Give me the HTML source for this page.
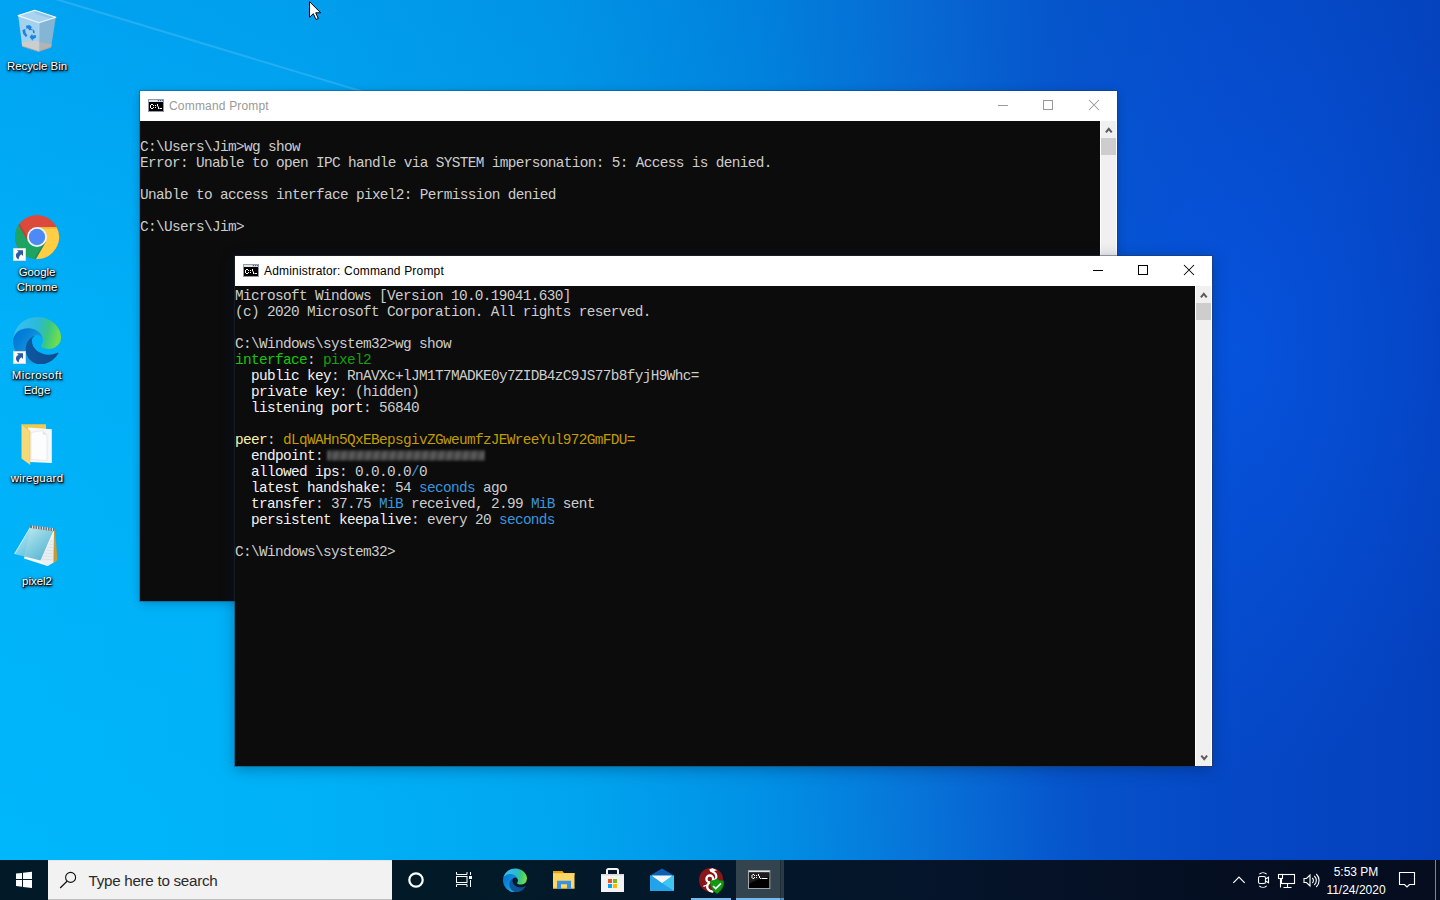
<!DOCTYPE html>
<html>
<head>
<meta charset="utf-8">
<title>Desktop</title>
<style>
*{box-sizing:border-box;margin:0;padding:0}
html,body{width:1440px;height:900px;overflow:hidden;background:#0078d7;font-family:"Liberation Sans",sans-serif}
#desk{position:absolute;left:0;top:0;width:1440px;height:900px;overflow:hidden;
background:
 radial-gradient(ellipse 280px 430px at 1240px 350px, rgba(6,92,238,.55), rgba(6,92,238,0) 100%),
 linear-gradient(100deg, rgba(0,185,255,.0) 0%, rgba(0,185,255,0) 100%),
 linear-gradient(90deg,#00adf6 0px,#00a8f2 300px,#009be9 560px,#0086df 760px,#086bd4 920px,#0654cb 1060px,#0548c6 1220px,#0440bc 1440px);
}
#desk .glow{position:absolute;left:0;top:0;width:1440px;height:860px;
background:radial-gradient(ellipse 1100px 800px at 0px 900px,rgba(0,190,255,.6) 0%,rgba(0,190,255,.35) 45%,rgba(0,190,255,0) 100%),linear-gradient(180deg,rgba(0,90,200,.12) 0px,rgba(0,120,220,0) 300px)}
.win{position:absolute;background:#fff;box-shadow:0 0 0 1px rgba(45,50,60,.42),0 3px 14px 0 rgba(0,30,70,.38)}
.win.inact{box-shadow:0 0 0 1px rgba(30,45,70,.32),0 2px 9px 0 rgba(0,30,70,.30)}
.win .tb{position:absolute;left:0;top:0;right:0;height:30px;background:#fff}
.win .ttl{position:absolute;left:29px;top:7px;font-size:12px;line-height:16px;white-space:nowrap;color:#000;letter-spacing:.18px}
.win.inact .ttl{color:#999}
.term{position:absolute;left:0;top:30px;width:960px;height:480px;background:#0c0c0c;color:#ccc;
font-family:"Liberation Mono",monospace;font-size:14.4px;letter-spacing:-0.64px;line-height:16px;white-space:pre;overflow:hidden}
.term div{height:16px;position:relative;top:1.5px}
.sb{position:absolute;left:961px;top:30px;width:15px;height:480px;background:#f0f0f0}
.sb .th{position:absolute;left:0;top:17px;width:15px;height:17px;background:#cdcdcd}
.blr{position:absolute;left:92px;top:2.500px;width:158px;height:11px;filter:blur(1px);background:linear-gradient(180deg,rgba(12,12,12,.45),rgba(12,12,12,0) 30%,rgba(12,12,12,0) 70%,rgba(12,12,12,.45)),repeating-linear-gradient(100deg,#595959 0,#595959 3px,#474747 4px,#474747 7px,#595959 8px)}
.g{color:#13a10e}.G{color:#16c60c}.w{color:#f2f2f2}.y{color:#c19c00}.Y{color:#f9f1a5}.c{color:#3a96dd}
#task{position:absolute;left:0;top:860px;width:1440px;height:40px;
background:linear-gradient(90deg,#021a27 0px,#021a28 450px,#03182a 700px,#05142a 950px,#050f22 1200px,#050d1f 1440px)}
.ico{position:absolute}
.lbl{position:absolute;width:90px;text-align:center;color:#fff;font-size:11.400px;line-height:15px;
text-shadow:1px 1px 1px rgba(0,0,0,.9),0 1px 2px rgba(0,0,0,.9),0 0 3px rgba(0,0,0,.75),1px 2px 3px rgba(0,0,0,.6)}
</style>
</head>
<body>
<svg width="0" height="0" style="position:absolute">
<defs>
<symbol id="cmdi" viewBox="0 0 16 13">
<rect x="0" y="0" width="16" height="13" fill="#9499a1"/>
<rect x="1" y="1" width="14" height="2" fill="#dfe3ea"/>
<rect x="9.800" y="1" width="1.200" height="1.200" fill="#3f64a3"/><rect x="11.800" y="1" width="1.200" height="1.200" fill="#3f64a3"/><rect x="13.700" y="1" width="1.200" height="1.200" fill="#3f64a3"/>
<rect x="1" y="3" width="14" height="9" fill="#000"/>
<path fill="#fff" d="M3 5h2v1h-2zM2 6h1v3h-1zM3 9h2v1h-2zM5 6h1v1h-1zM5 8h1v1h-1zM7 6h1v1h-1zM7 8h1v1h-1zM9 5h1v2h-1zM9.5 7h1v1h-1zM10 8h1v2h-1zM11.5 9h2.5v1h-2.5z"/>
</symbol>
<symbol id="arru" viewBox="0 0 8 6"><path d="M0.900 5.400L3.800 1.800L6.700 5.400" fill="none" stroke="#5c5c5c" stroke-width="2"/></symbol>
</defs></svg>
<div id="desk"><div class="glow"></div>
<svg width="1440" height="860" style="position:absolute;left:0;top:0"><path d="M0 0H55L520 140H0z" fill="rgba(0,180,255,.10)"/><path d="M52 -2L520 139" stroke="rgba(160,225,255,.22)" stroke-width="2" fill="none" style="filter:blur(.7px)"/></svg>

<!-- DESKTOP ICONS -->
<div id="icons">
<svg width="340" height="620" viewBox="0 0 340 620" style="position:absolute;left:0;top:0">
<defs>
<linearGradient id="rbL" x1="0" y1="0" x2="0" y2="1"><stop offset="0" stop-color="#8cc8ee"/><stop offset=".75" stop-color="#a9d4ee"/><stop offset=".8" stop-color="#cfd2d4"/><stop offset="1" stop-color="#c4c4c4"/></linearGradient>
<linearGradient id="rbR" x1="0" y1="0" x2="0" y2="1"><stop offset="0" stop-color="#74a9cc"/><stop offset=".78" stop-color="#8cb6d0"/><stop offset=".83" stop-color="#b9bcbe"/><stop offset="1" stop-color="#adadad"/></linearGradient>
<linearGradient id="npg" x1="0" y1="0" x2="1" y2="1"><stop offset="0" stop-color="#d9f1f7"/><stop offset=".5" stop-color="#7fcde0"/><stop offset="1" stop-color="#3da5c6"/></linearGradient>
<symbol id="sc" viewBox="0 0 13 13">
<rect x="0" y="0" width="13" height="13" fill="#d8cdc8"/><rect x=".8" y=".8" width="11.400" height="11.400" fill="#fbfbfb"/>
<path d="M3.900 2.200H10V8L8.300 6.300C6.600 7.600 5.800 9.300 5.600 11.600C3.400 10.200 2.400 8 3.200 6C3.700 4.900 4.600 4.200 5.700 3.900Z" fill="#2a5aa0"/>
</symbol>
</defs>
<!-- recycle bin -->
<g>
<path d="M18.200 15.600L34.700 10.200L55.800 17.200L39.100 22.800z" fill="#a9d4ef"/>
<path d="M34.700 10.200L55.800 17.200L52.500 19.200L35.200 13.400z" fill="#8fc3e4" opacity=".8"/>
<path d="M18.200 15.600L39.100 22.800L38.700 51.600L22.200 46.300z" fill="#a3d1ee"/>
<path d="M39.100 22.800L55.800 17.200L51.100 47.200L38.700 51.600z" fill="#85b5d4"/>
<path d="M22.200 46.300L21.700 42.500L35.500 40.800L38.900 42L38.700 51.600z" fill="#cdcdcd"/>
<path d="M38.900 42L51.600 44L51.100 47.200L38.700 51.600z" fill="#b3b3b3"/>
<path d="M18.200 15.600L34.700 10.200L55.800 17.200L39.100 22.800z" fill="none" stroke="#eef7fc" stroke-width="1.200" stroke-linejoin="round"/>
<path d="M39.100 22.800L38.700 51.600" stroke="#c2e0f2" stroke-width=".6" fill="none"/>
<path d="M22.200 46.300L38.700 51.600L51.100 47.200" fill="none" stroke="#a0a0a0" stroke-width=".8"/>
<g fill="#1c84de">
<path d="M26 25.700l3.400-.8l2.900 2.400l-1.500.6l1.500 2.200l-3 .2l-1.400-2.100l-1.400.7z"/>
<path d="M22.400 30l2.800-.9l.4 3.700l1.900 2.900l-1.700 1.300l-2.700-3.300z"/>
<path d="M29.600 37l2.500-3l.3 1.600l3.300-.7l.4 2.700l-3.500 2l.2 1.500z"/>
<path d="M32.400 28.400l2.100 2.700l.2 2.100l-1.600-.3z"/>
</g>
</g>
<!-- chrome -->
<g transform="translate(37,237)">
<circle r="22" fill="#db4a3d"/>
<path d="M0,-10L19.600,-10A22,22 0 0 1 -1.140,21.970L8.660,5L0,0Z" fill="#ffce44"/>
<path d="M8.660,5L-1.140,21.970A22,22 0 0 1 -18.460,-11.970L-8.660,5L0,0Z" fill="#1da462"/>
<path d="M0,-10L19.600,-10L19.900,-8.300L3,-8.300z" fill="#000" opacity=".10"/>
<path d="M8.660,5L-1.140,21.970L-2.900,21.800L6.400,5.500z" fill="#000" opacity=".10"/>
<path d="M-8.660,5L-18.460,-11.970L-17.300,-13.500L-7.500,3.500z" fill="#000" opacity=".12"/>
<circle r="10" fill="#f4f4f4"/>
<circle r="8.200" fill="#4c8bf5"/>
</g>
<use href="#sc" x="13" y="248" width="13" height="13"/>
<!-- edge -->
<use href="#edge" x="13" y="316" width="48" height="48"/>
<use href="#sc" x="13" y="351" width="13" height="13"/>
<!-- folder -->
<g>
<path d="M21.500 424.300H46V431H30z" fill="#f2c94f"/>
<path d="M28 427.500L51.800 429.300V463L30 462z" fill="#f7f7f7"/>
<path d="M31 432.500L42.500 430.600l4.500 4.200V460.500L31 459.500z" fill="#fdfdfd" stroke="#d7e3ea" stroke-width=".6"/>
<path d="M42.500 430.600l.3 4l4.200.2z" fill="#e3e7ea"/>
<path d="M21.500 424.300L30 431V464.800L21.500 458.500z" fill="#f7d978"/>
<path d="M21.500 424.300L30 431V464.800" fill="none" stroke="#e9c55a" stroke-width=".6"/>
</g>
<!-- notepad -->
<g>
<path d="M55 529.500L57.500 560L53.500 563.500L52.500 531z" fill="#c49a3c"/>
<path d="M30.500 527L54 529.800L53.300 562.500L47.500 566L24 558.500z" fill="#f6f8f9"/>
<path d="M52.500 536L53.300 562.500L47.500 566L40.500 560.500z" fill="#e9eef1"/>
<g stroke="#c9d6dd" stroke-width=".5"><path d="M49.800 541l3.100.4M48.500 544l4.400.5M47.200 547l5.700.6M45.900 550l7 .7M44.600 553l8.400.8M43.300 556l9.700.9M42 559l11 .9"/></g>
<path d="M30.500 527L53.500 530.500L40.500 560.500L14.500 554z" fill="url(#npg)" opacity=".92"/>
<path d="M30.500 527L14.500 554" stroke="#e8f6fa" stroke-width=".8" fill="none"/>
<path d="M30.300 525.200L54.300 528.200L54 531.200L30 528z" fill="#6f7478"/>
<g stroke="#e8e8e8" stroke-width=".9"><path d="M32.500 525.500v3M35 525.800v3M37.500 526.100v3M40 526.400v3M42.500 526.700v3M45 527v3M47.500 527.300v3M50 527.600v3M52.500 527.900v3"/></g>
</g>
<!-- cursor -->
<path d="M309.500 1.600V17.300L313.300 13.700L316 19.500L318.300 18.500L315.700 12.800H320.700z" fill="#fff" stroke="#000" stroke-width="1" stroke-linejoin="miter" transform="translate(0,0)"/>
</svg>
<div class="lbl" style="left:-8px;top:59px">Recycle Bin</div>
<div class="lbl" style="left:-8px;top:265px">Google<br>Chrome</div>
<div class="lbl" style="left:-8px;top:368px"><span style="letter-spacing:.45px">Microsoft</span><br>Edge</div>
<div class="lbl" style="left:-8px;top:471px"><span style="letter-spacing:.28px">wireguard</span></div>
<div class="lbl" style="left:-8px;top:574px">pixel2</div>
</div>

<!-- WINDOW 1 -->
<div class="win inact" id="w1" style="left:140px;top:91px;width:977px;height:510px">
 <div class="tb">
  <svg style="position:absolute;left:8px;top:8px" width="16" height="13"><use href="#cmdi"/></svg><div class="ttl">Command Prompt</div><svg class="ctl" width="138" height="30" viewBox="0 0 138 30" style="position:absolute;right:0;top:0">
<path d="M19 14.5h10" stroke="#999" stroke-width="1" fill="none"/>
<rect x="64.5" y="9.5" width="9" height="9" stroke="#999" stroke-width="1" fill="none"/>
<path d="M110 9l10 10M120 9l-10 10" stroke="#999" stroke-width="1.05" fill="none"/>
</svg>
 </div>
 <div class="term"><div> </div><div>C:\Users\Jim&gt;wg show</div><div>Error: Unable to open IPC handle via SYSTEM impersonation: 5: Access is denied.</div><div> </div><div>Unable to access interface pixel2: Permission denied</div><div> </div><div>C:\Users\Jim&gt;</div></div>
 <div class="sb"><svg style="position:absolute;left:3.5px;top:6px" width="8" height="6"><use href="#arru"/></svg><div class="th"></div><svg style="position:absolute;left:3.5px;bottom:5px;transform:rotate(180deg)" width="8" height="6"><use href="#arru"/></svg></div>
</div>

<!-- WINDOW 2 -->
<div class="win" id="w2" style="left:235px;top:256px;width:977px;height:510px">
 <div class="tb">
  <svg style="position:absolute;left:8px;top:8px" width="16" height="13"><use href="#cmdi"/></svg><div class="ttl">Administrator: Command Prompt</div><svg class="ctl" width="138" height="30" viewBox="0 0 138 30" style="position:absolute;right:0;top:0">
<path d="M19 14.5h10" stroke="#000" stroke-width="1" fill="none"/>
<rect x="64.5" y="9.5" width="9" height="9" stroke="#000" stroke-width="1" fill="none"/>
<path d="M110 9l10 10M120 9l-10 10" stroke="#000" stroke-width="1.05" fill="none"/>
</svg>
 </div>
 <div class="term"><div>Microsoft Windows [Version 10.0.19041.630]</div><div>(c) 2020 Microsoft Corporation. All rights reserved.</div><div> </div><div>C:\Windows\system32&gt;wg show</div><div><span class="G">interface</span>: <span class="g">pixel2</span></div><div>  <span class="w">public key</span>: RnAVXc+lJM1T7MADKE0y7ZIDB4zC9JS77b8fyjH9Whc=</div><div>  <span class="w">private key</span>: (hidden)</div><div>  <span class="w">listening port</span>: 56840</div><div> </div><div><span class="Y">peer</span>: <span class="y">dLqWAHn5QxEBepsgivZGweumfzJEWreeYul972GmFDU=</span></div><div>  <span class="w">endpoint</span>: <i class="blr"></i></div><div>  <span class="w">allowed ips</span>: 0.0.0.0<span class="c">/</span>0</div><div>  <span class="w">latest handshake</span>: 54 <span class="c">seconds</span> ago</div><div>  <span class="w">transfer</span>: 37.75 <span class="c">MiB</span> received, 2.99 <span class="c">MiB</span> sent</div><div>  <span class="w">persistent keepalive</span>: every 20 <span class="c">seconds</span></div><div> </div><div>C:\Windows\system32&gt;</div></div>
 <div class="sb"><svg style="position:absolute;left:3.5px;top:6px" width="8" height="6"><use href="#arru"/></svg><div class="th"></div><svg style="position:absolute;left:3.5px;bottom:5px;transform:rotate(180deg)" width="8" height="6"><use href="#arru"/></svg></div>
</div>

<!-- TASKBAR -->
<div id="task">
<svg width="1440" height="40" viewBox="0 0 1440 40" style="position:absolute;left:0;top:0">
<defs>
<linearGradient id="eg1" x1="0" y1="0" x2="1" y2="0"><stop offset="0" stop-color="#0c59a4"/><stop offset="1" stop-color="#114a8b"/></linearGradient>
<linearGradient id="eg2" x1="0.75" y1="0.55" x2="0.2" y2="0.05"><stop offset="0" stop-color="#1b9de2"/><stop offset=".16" stop-color="#1595df"/><stop offset=".67" stop-color="#0680d7"/><stop offset="1" stop-color="#0078d4"/></linearGradient>
<linearGradient id="eg3" x1="0.05" y1="0.45" x2="0.95" y2="0.6"><stop offset="0" stop-color="#35c1f1"/><stop offset=".45" stop-color="#2db9d9"/><stop offset=".72" stop-color="#36c68a"/><stop offset="1" stop-color="#70dd4a"/></linearGradient>
<symbol id="edge" viewBox="0 0 256 256">
<path d="M235.68 195.46a93.73 93.73 0 01-10.54 4.71 101.87 101.87 0 01-35.9 6.46c-47.32 0-88.54-32.55-88.54-74.32A31.48 31.48 0 01117.13 105c-42.8 1.8-53.8 46.4-53.8 72.53 0 73.88 68.09 81.37 82.76 81.37 7.91 0 19.84-2.3 27-4.56l1.31-.44a128.34 128.34 0 0066.6-52.8 4 4 0 00-5.32-5.64z" fill="url(#eg1)"/>
<path d="M105.73 246.4a79.2 79.2 0 01-22.74-21.34 80.72 80.72 0 0129.53-120c3.12-1.47 8.45-4.13 15.54-4a32.35 32.35 0 0125.69 13 31.88 31.88 0 016.36 18.66c0-.21 24.46-79.6-80-79.6-43.9 0-80 41.66-80 78.21a130.15 130.15 0 0012.11 56 128 128 0 00156.38 67.11 75.55 75.55 0 01-62.78-8z" fill="url(#eg2)"/>
<path d="M152.33 153.86c-.81 1.05-3.3 2.5-3.3 5.66 0 2.61 1.7 5.12 4.72 7.23 14.38 10 41.49 8.68 41.56 8.68a59.56 59.56 0 0030.27-8.35 61.38 61.38 0 0030.43-52.88c.26-22.41-8-37.31-11.34-43.91C223.48 28.84 177.74 5 128 5A128 128 0 000 131.2c.48-36.54 36.8-66.05 80-66.05 3.5 0 23.46.34 42 10.07 16.34 8.58 24.9 18.94 30.85 29.21 6.18 10.67 7.28 24.15 7.28 29.52s-2.74 13.33-7.8 19.91z" fill="url(#eg3)"/>
</symbol>
</defs>
<!-- search box -->
<rect x="48" y="0" width="344" height="40" fill="#f2f2f2"/>
<rect x="48" y="39" width="344" height="1" fill="#bdbdbd"/>
<rect x="48" y="0" width="344" height="1" fill="#e6e6e6"/>
<!-- windows logo -->
<path fill="#fff" d="M16 13.500L22 12.900V19H16ZM23 12.700L32 11.750V19H23ZM16 20H22V26.800L16 25.900ZM23 20H32V28.100L23 26.900Z"/>
<!-- search icon -->
<circle cx="70.6" cy="17.4" r="5" fill="none" stroke="#111" stroke-width="1.1"/>
<path d="M67 21.3L60.2 28" stroke="#111" stroke-width="1.2" fill="none"/>
<!-- cortana -->
<circle cx="416" cy="20" r="6.7" fill="none" stroke="#fff" stroke-width="2.2"/>
<!-- task view -->
<g fill="none" stroke="#fff" stroke-width="1">
<path d="M456.5 12v2.5h10.500V12M456.500 27v-2.5h10.500V27"/>
<rect x="456.500" y="16.500" width="10.500" height="6"/>
<path d="M470.5 12v3M470.5 20v7"/>
</g>
<rect x="469" y="16" width="3" height="3" fill="#fff"/>
<!-- edge -->
<use href="#edge" x="503" y="8" width="24" height="24"/>
<!-- explorer -->
<path d="M553 11h9.500l1.500 2h10.500v2H553z" fill="#e8a400"/>
<rect x="553" y="13.200" width="21.500" height="15.300" fill="#ffd766"/>
<rect x="553" y="27.500" width="21.500" height="1" fill="#f5c446"/>
<path d="M557 20.800h14V29h-4v-4.800h-6V29h-4z" fill="#3b93e0"/>
<!-- store -->
<path d="M607 14v-3.500a1.500 1.500 0 0 1 1.500-1.500h8a1.500 1.500 0 0 1 1.500 1.500V14" fill="none" stroke="#f4f4f4" stroke-width="2"/>
<rect x="601" y="14" width="23" height="18" fill="#f3f3f3"/>
<rect x="601" y="14" width="23" height="1.500" fill="#dcdcdc"/>
<rect x="608" y="19" width="4" height="4" fill="#f25022"/><rect x="613" y="19" width="4" height="4" fill="#7fba00"/>
<rect x="608" y="24" width="4" height="4" fill="#00a4ef"/><rect x="613" y="24" width="4" height="4" fill="#ffb900"/>
<!-- mail -->
<path d="M650 15.500L662 8.500L674 15.500V17H650z" fill="#0f5fb5"/>
<rect x="650" y="15.500" width="24" height="15.500" fill="#1f9fe8"/>
<path d="M674 15.500V31L658.500 21.500z" fill="#3ec6f3"/>
<path d="M652 15.800H672L662 22.800z" fill="#f4f4f4"/>
<path d="M650 15.500L674 31H650z" fill="#22a3ea"/>
<path d="M652 15.800H672L662 22.800z" fill="#f6f6f6"/>
<!-- wireguard -->
<circle cx="711.100" cy="19.900" r="12.100" fill="#88171a"/>
<path d="M709.300 9.300L712.500 8.200L717.200 10.300L714.300 11L712.800 12.600L710.200 11.800z" fill="#fff"/>
<path d="M712.300 11.300C714.800 12.600 716.600 14.600 716.300 17.300C716.100 18.600 715.300 19.600 714.300 20.200" fill="none" stroke="#fff" stroke-width="2.200" stroke-linecap="round"/>
<circle cx="709.800" cy="18.900" r="3.400" fill="none" stroke="#fff" stroke-width="2.300"/>
<path d="M709.300 22.600C707.300 24.500 706.600 27 708 29.200C709 30.700 710.500 31.400 712.300 31.700" fill="none" stroke="#fff" stroke-width="2.300" stroke-linecap="round"/>
<path d="M707.300 25L703.400 26.400" stroke="#fff" stroke-width="1.300" fill="none"/>
<path d="M717 18.800C715 20.300 712.600 21 710.300 21C710.300 26 712 30.600 717 33.600C722 30.600 723.800 26 723.800 21C721.400 21 719 20.300 717 18.800Z" fill="#109a10" stroke="#0b760b" stroke-width=".7"/>
<path d="M713.100 26L715.700 28.600L721 23.400" fill="none" stroke="#fff" stroke-width="1.600"/>
<rect x="691" y="38" width="40" height="2" fill="#76b9ed"/>
<!-- cmd active -->
<rect x="736" y="0" width="44.500" height="40" fill="#34444e"/>
<rect x="781" y="0" width="3" height="40" fill="#2b3a45"/>
<rect x="736" y="38" width="44.500" height="2" fill="#76b9ed"/>
<rect x="781" y="38" width="3" height="2" fill="#5a8fba"/>
<rect x="748" y="10" width="22.300" height="19" fill="#a2a7ad"/>
<rect x="749" y="11" width="20.300" height="1.500" fill="#e4e7ec"/>
<rect x="749" y="12.500" width="20.300" height="15.500" fill="#000"/>
<path d="M749 12.500h20.300v4.500c-7 .5-14 3-20.300 7z" fill="#1e1e1e"/>
<g fill="#fff"><path d="M752.500 14h1.600v1h-1.600zM751.500 15h1v3h-1zM752.500 18h1.600v1h-1.600zM754 15h1v1h-1zM754 17h1v1h-1zM756 15h1v1h-1zM756 17h1v1h-1zM758 14h1v2h-1zM759 16h1v2h-1zM760 18h1v1h-1zM761.500 18h6v1h-6z"/></g>
<!-- tray -->
<g fill="none" stroke="#fff" stroke-width="1.200">
<path d="M1233.300 22.800L1239 17l5.700 5.800"/>
</g>
<g fill="none" stroke="#fff" stroke-width="1.100">
<rect x="1258.500" y="16.500" width="7" height="7" rx="1.500"/>
<path d="M1265.500 19l3-1.700v5.400l-3-1.700"/>
<path d="M1259.300 14.200a5.500 5.500 0 0 1 7.400 0M1259.300 25.800a5.500 5.500 0 0 0 7.400 0"/>
<rect x="1281.500" y="14.500" width="13" height="9"/>
<path d="M1283.500 27.500h8M1287.500 23.500v4"/>
<rect x="1278.500" y="14.500" width="4" height="4" fill="#050e21"/>
<path d="M1280.500 18.500v9"/>
<path d="M1304 18.500h2.500l3.500-3.500v11l-3.500-3.500H1304z"/>
<path d="M1312.300 18a3.300 3.300 0 0 1 0 5M1314.300 16a6 6 0 0 1 0 9M1316.300 14a9 9 0 0 1 0 13"/>
<path d="M1399.500 12.500h15v12h-5l-2.500 2.500l-2.500-2.500h-5z"/>
</g>
<rect x="1435" y="0" width="1" height="40" fill="#7f868f"/>
</svg>
<div style="position:absolute;left:88.500px;top:10.600px;font-size:15.200px;line-height:20px;color:#2b2b2b;white-space:nowrap;letter-spacing:-0.280px" id="srch">Type here to search</div>
<div style="position:absolute;left:1296px;top:3.500px;width:120px;text-align:center;font-size:12px;line-height:17px;color:#fff;white-space:nowrap" id="clock"><div id="tm">5:53 PM</div><div id="dt" style="margin-top:1px">11/24/2020</div></div>
</div>
</div>
</body>
</html>
